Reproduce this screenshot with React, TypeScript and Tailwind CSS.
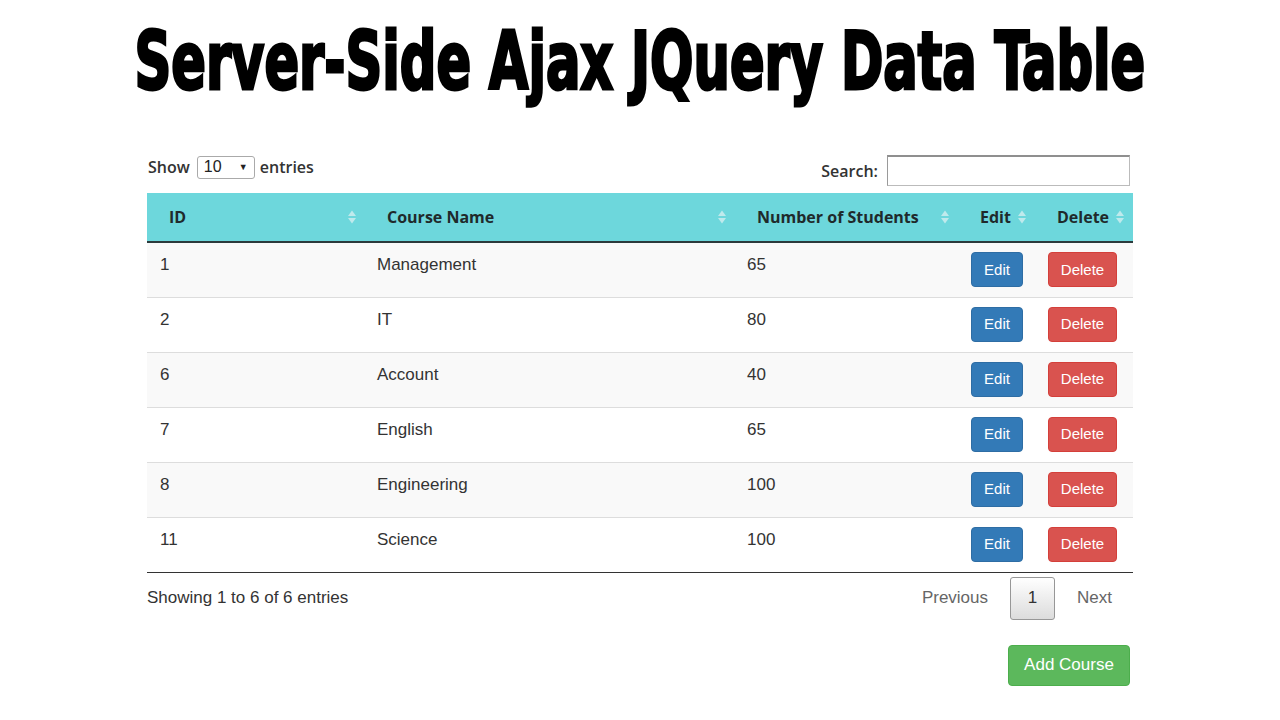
import React from "react";

const rows = [
  { id: "1", name: "Management", n: "65" },
  { id: "2", name: "IT", n: "80" },
  { id: "6", name: "Account", n: "40" },
  { id: "7", name: "English", n: "65" },
  { id: "8", name: "Engineering", n: "100" },
  { id: "11", name: "Science", n: "100" },
];

function SortIcon() {
  return (
    <svg width="10" height="16" viewBox="0 0 10 16" className="absolute right-[8px] top-1/2 -translate-y-1/2">
      <path d="M1 7 L5 1.5 L9 7 Z" fill="#bfeaec" />
      <path d="M1 9 L5 14.5 L9 9 Z" fill="#bfeaec" />
    </svg>
  );
}

const headers = ["ID", "Course Name", "Number of Students", "Edit", "Delete"];

export default function App() {
  return (
    <div className="w-[1280px] h-[720px] bg-white overflow-hidden" style={{ fontFamily: '"Liberation Sans", Arial, sans-serif' }}>
      <div className="h-[155px] pt-[14px] flex justify-center">
        <div
          className="inline-block origin-top text-black font-bold text-[80px] leading-[96px] scale-x-[0.71] whitespace-nowrap [-webkit-text-stroke:3px_black]"
          style={{ fontFamily: '"DejaVu Sans Condensed", "DejaVu Sans", sans-serif' }}
        >
          Server-Side Ajax JQuery Data Table
        </div>
      </div>

      <div className="mx-auto w-[986px]">
        <div className="flex items-center justify-between h-[31px]" style={{ fontFamily: '"Open Sans", sans-serif' }}>
          <div className="flex items-center text-[16px] font-semibold text-[#333] -mt-[7px] ml-[1px]">
            <span>Show</span>
            <div className="ml-[7px] mr-[5px] w-[58px] h-[23px] border border-[#aaa] rounded-[3px] flex items-center justify-between px-[6px] font-normal text-[16px] text-[#222]">
              <span style={{ fontFamily: '"Liberation Sans", Arial, sans-serif' }}>10</span>
              <span className="text-[9px] text-[#222]">▼</span>
            </div>
            <span>entries</span>
          </div>
          <div className="flex items-center mr-[3px] text-[16px] font-semibold text-[#333]">
            <span className="mt-[1px]">Search:</span>
            <div className="ml-[9px] w-[243px] h-[31px] border border-[#bbb] border-t-[#8f8f8f] border-l-[#9a9a9a] border-t-2 bg-white" />
          </div>
        </div>

        <table className="mt-[7px] w-[986px] table-fixed border-collapse">
          <colgroup>
            <col className="w-[218px]" />
            <col className="w-[370px]" />
            <col className="w-[223px]" />
            <col className="w-[77px]" />
            <col className="w-[98px]" />
          </colgroup>
          <thead>
            <tr className="bg-[#6dd7dc] h-[49px] border-b-2 border-[#2c3a3c]">
              {headers.map((h) => (
                <th
                  key={h}
                  className="relative text-left pl-[22px] text-[16px] font-bold text-[#1f2a2b] whitespace-nowrap"
                  style={{ fontFamily: '"Open Sans", sans-serif' }}
                >
                  {h}
                  <SortIcon />
                </th>
              ))}
            </tr>
          </thead>
          <tbody className="text-[17px] text-[#333]">
            {rows.map((r, i) => (
              <tr
                key={r.id}
                className={`h-[55px] ${i % 2 === 0 ? "bg-[#f9f9f9]" : "bg-white"} ${i === rows.length - 1 ? "border-b border-[#333]" : "border-b border-[#dddddd]"}`}
              >
                <td className="align-top pl-[13px] pt-[11px] leading-[22px]">{r.id}</td>
                <td className="align-top pl-[12px] pt-[11px] leading-[22px]">{r.name}</td>
                <td className="align-top pl-[12px] pt-[11px] leading-[22px]">{r.n}</td>
                <td className="align-middle pl-[13px]">
                  <button className="h-[35px] w-[52px] rounded-[4px] bg-[#337ab7] border border-[#2e6da4] text-white text-[15px]">Edit</button>
                </td>
                <td className="align-middle pl-[13px]">
                  <button className="h-[35px] w-[69px] rounded-[4px] bg-[#d9534f] border border-[#d43f3a] text-white text-[15px]">Delete</button>
                </td>
              </tr>
            ))}
          </tbody>
        </table>

        <div className="mt-[4px] flex items-center justify-between h-[43px]">
          <div className="text-[17px] text-[#333]">Showing 1 to 6 of 6 entries</div>
          <div className="flex items-center text-[17px] text-[#666]">
            <span className="px-[20px]">Previous</span>
            <span className="ml-[2px] w-[45px] h-[43px] flex items-center justify-center border border-[#979797] rounded-[3px] bg-gradient-to-b from-white to-[#dcdcdc] text-[#333]">1</span>
            <span className="ml-[2px] pl-[20px] pr-[21px]">Next</span>
          </div>
        </div>

        <div className="mt-[25px] flex justify-end mr-[3px]">
          <button className="h-[41px] w-[122px] rounded-[4px] bg-[#5cb85c] border border-[#4cae4c] text-white text-[17px]">Add Course</button>
        </div>
      </div>
    </div>
  );
}
